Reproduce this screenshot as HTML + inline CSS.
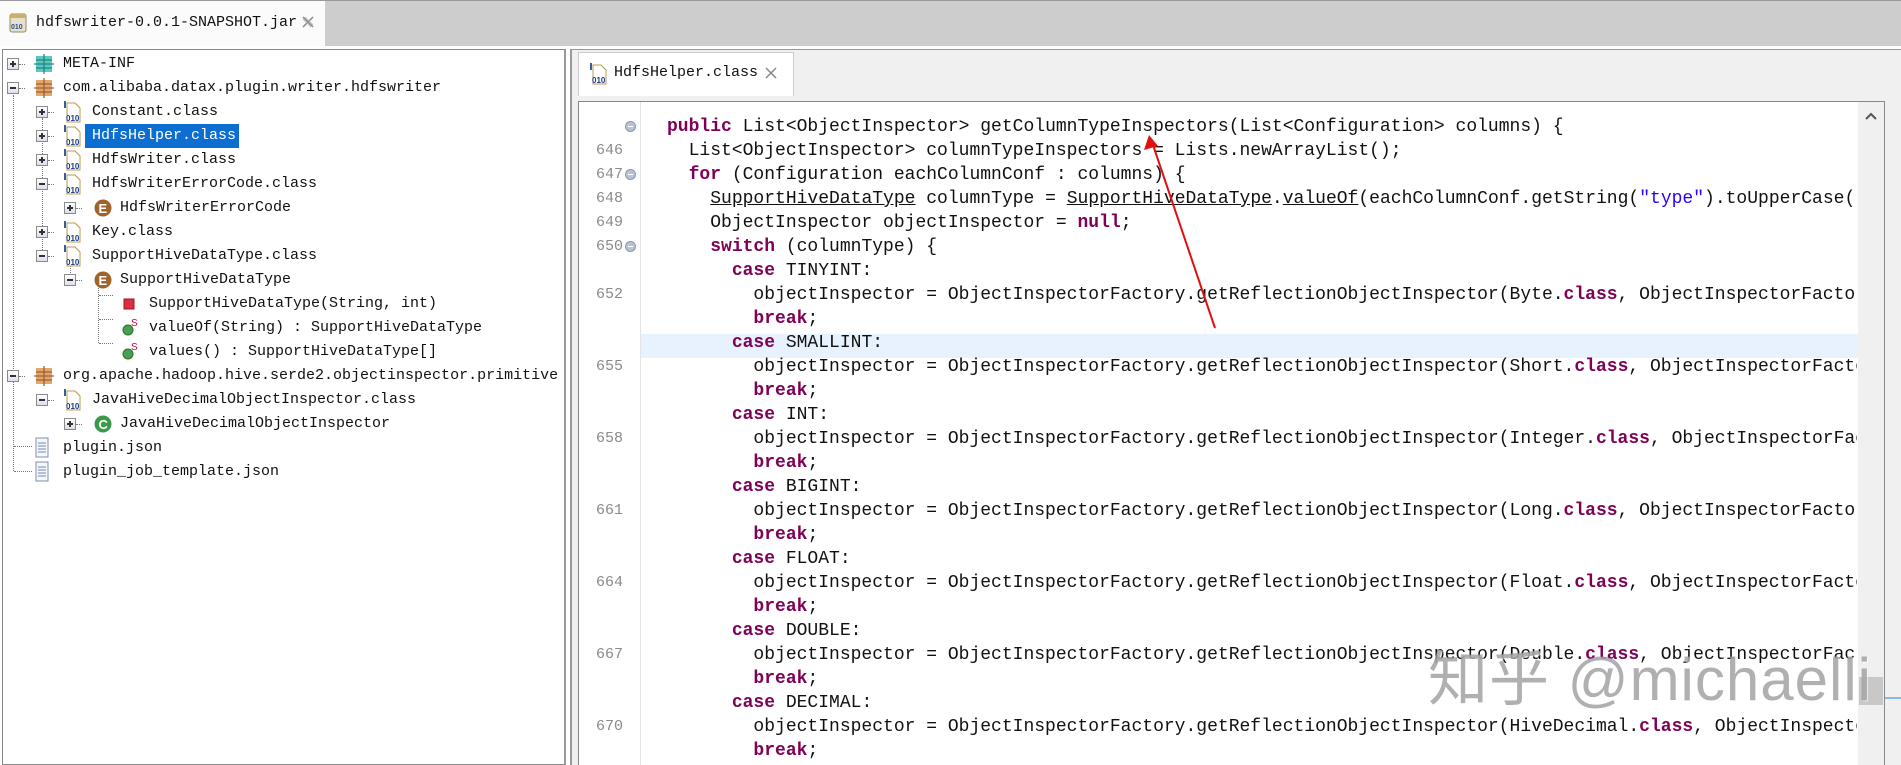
<!DOCTYPE html>
<html><head><meta charset="utf-8"><style>
*{margin:0;padding:0;box-sizing:border-box}
body{width:1901px;height:765px;overflow:hidden;background:#fff;position:relative;font-family:"Liberation Mono",monospace}
.abs{position:absolute}
#topbar{left:0;top:0;width:1901px;height:46px;background:#cdcdcd;border-top:1px solid #999}
#jartab{left:0;top:1px;width:325px;height:45px;background:#fbfbfb}
.tree{left:2px;top:49px;width:564px;height:716px;border:1px solid #888;border-right:2px solid #999;background:#fff}
.row{position:absolute;height:24px;line-height:24px;font-size:15px;color:#111;white-space:nowrap}
.pm{position:absolute;width:12px;height:12px;border:1px solid #8a8a8a;background:linear-gradient(#fff,#dde);}
.pm:before{content:"";position:absolute;left:2px;top:4px;width:6px;height:2px;background:#333}
.pm.p:after{content:"";position:absolute;left:4px;top:2px;width:2px;height:6px;background:#333}
.vd{position:absolute;border-left:1px dotted #777;width:0}
.hd{position:absolute;border-top:1px dotted #777;height:0}
.right{left:570px;top:49px;width:1331px;height:716px;background:#f0f0f0;border-left:2px solid #999;border-top:1px solid #999}
#editor{left:578px;top:101px;width:1307px;height:664px;background:#fff;border:1px solid #888;border-bottom:none;overflow:hidden}
.ln{position:absolute;height:24px;line-height:24px;font-size:15px;color:#8a8a8a;text-align:right;width:44px;left:0}
.cl{position:absolute;height:24px;line-height:24px;font-size:18px;color:#111;white-space:pre;left:88px}
.k{color:#7f0055;font-weight:bold}
.s{color:#2a00ff}
.u{text-decoration:underline}
.fold{position:absolute;left:46px;width:11px;height:11px;border-radius:50%;background:#b8c4d4;border:1px solid #8898b0}
.fold:before{content:"";position:absolute;left:2px;top:4px;width:5px;height:1px;background:#fff}
</style></head><body>
<div id="topbar" class="abs"></div>
<div id="jartab" class="abs"></div>
<svg class="abs" style="left:9px;top:13px" width="18" height="20"><rect x="1" y="1" width="16" height="18" rx="2" fill="#e8e0c8" stroke="#9a8a60"/><rect x="1" y="1" width="16" height="4" fill="#c8b070"/><text x="2" y="16" font-size="7" font-family="Liberation Sans" fill="#2050a0" font-weight="bold">010</text></svg>
<div class="abs" style="left:36px;top:11px;font-size:15px;line-height:24px;color:#111">hdfswriter-0.0.1-SNAPSHOT.jar</div>
<svg class="abs" style="left:302px;top:16px" width="12" height="12"><path d="M1 1L11 11M11 1L1 11" stroke="#888" stroke-width="1.5"/><path d="M3 1L11 9M1 3L9 11" stroke="#bbb" stroke-width="1"/></svg>

<div class="abs tree"></div>
<div class="abs" style="left:85px;top:124px;width:154px;height:24px;background:#0c6ed1"></div>
<div class="vd" style="left:13px;top:95px;height:376px"></div>
<div class="vd" style="left:42px;top:118px;height:138px"></div>
<div class="vd" style="left:70px;top:263px;height:10px"></div>
<div class="vd" style="left:98px;top:285px;height:58px"></div>
<div class="hd" style="left:99px;top:295px;width:14px"></div>
<div class="hd" style="left:99px;top:319px;width:14px"></div>
<div class="hd" style="left:99px;top:343px;width:14px"></div>
<div class="hd" style="left:14px;top:446px;width:18px"></div>
<div class="hd" style="left:14px;top:471px;width:18px"></div>

<div id="treerows"></div>
<script>
var rows=[
[0,'META-INF','p','meta'],[0,'com.alibaba.datax.plugin.writer.hdfswriter','m','pkg'],
[1,'Constant.class','p','cls'],[1,'HdfsHelper.class','p','cls',1],[1,'HdfsWriter.class','p','cls'],
[1,'HdfsWriterErrorCode.class','m','cls'],[2,'HdfsWriterErrorCode','p','E'],[1,'Key.class','p','cls'],
[1,'SupportHiveDataType.class','m','cls'],[2,'SupportHiveDataType','m','E'],
[3,'SupportHiveDataType(String, int)','','ctor'],[3,'valueOf(String) : SupportHiveDataType','','st'],[3,'values() : SupportHiveDataType[]','','st'],
[0,'org.apache.hadoop.hive.serde2.objectinspector.primitive','m','pkg'],
[1,'JavaHiveDecimalObjectInspector.class','m','cls'],[2,'JavaHiveDecimalObjectInspector','p','C'],
[0,'plugin.json','','json'],[0,'plugin_job_template.json','','json']];
var textX=[63,92,120,149],h='';
rows.forEach(function(r,i){
 var y=64+24*i,lv=r[0],tx=textX[lv],ix=tx-29,bx=tx-56;
 if(r[2]) h+='<div class="pm '+r[2]+'" style="left:'+bx+'px;top:'+(y-6)+'px"></div><div class="hd" style="left:'+(bx+12)+'px;top:'+y+'px;width:6px"></div>';
 var ic='';
 if(r[3]=='meta'||r[3]=='pkg'){var c=r[3]=='meta'?'#5cc8c0':'#e0a870',d=r[3]=='meta'?'#208880':'#a06030';
  ic='<svg class="abs" style="left:'+ix+'px;top:'+(y-10)+'px" width="20" height="20"><rect x="2" y="2" width="16" height="16" fill="'+c+'"/><path d="M10 0V20M0 10H20M2 6H18M2 14H18" stroke="'+d+'" stroke-width="1.3"/></svg>';}
 else if(r[3]=='cls'){ic='<svg class="abs" style="left:'+(ix-1)+'px;top:'+(y-12)+'px" width="20" height="24"><path d="M5 3H13L18 8V22H5Z" fill="#fff" stroke="#b89850"/><path d="M3 1V8" stroke="#3060a0" stroke-width="2"/><text x="4" y="21" font-size="8" font-weight="bold" font-family="Liberation Sans" fill="#1a3a80">010</text></svg>';}
 else if(r[3]=='E'||r[3]=='C'){var col=r[3]=='E'?'#a0642a':'#3a9a4a';
  ic='<svg class="abs" style="left:'+(ix+3)+'px;top:'+(y-9)+'px" width="18" height="18"><circle cx="9" cy="9" r="8.5" fill="'+col+'"/><text x="4.5" y="14" font-size="13" font-weight="bold" font-family="Liberation Sans" fill="#fff">'+r[3]+'</text></svg>';}
 else if(r[3]=='ctor'){ic='<svg class="abs" style="left:'+(ix+3)+'px;top:'+(y-6)+'px" width="12" height="12"><rect x="1" y="1" width="10" height="10" fill="#d83040" stroke="#a01020"/></svg>';}
 else if(r[3]=='st'){ic='<svg class="abs" style="left:'+(ix+2)+'px;top:'+(y-11)+'px" width="18" height="20"><circle cx="6" cy="13" r="5" fill="#4aa050" stroke="#2a7030"/><text x="9" y="9" font-size="10" font-family="Liberation Sans" fill="#b01040">S</text></svg>';}
 else if(r[3]=='json'){ic='<svg class="abs" style="left:'+ix+'px;top:'+(y-11)+'px" width="16" height="22"><rect x="2" y="1" width="12" height="19" fill="#f4f6fa" stroke="#8090a8"/><path d="M4 6H12M4 9H12M4 12H12M4 15H12" stroke="#7088b0"/></svg>';}
 h+=ic;
 h+='<div class="row" style="left:'+tx+'px;top:'+(y-12)+'px;'+(r[4]?'color:#fff':'')+'">'+r[1]+'</div>';
});
document.getElementById('treerows').innerHTML=h;
</script>

<div class="abs right"></div>
<div class="abs" style="left:578px;top:52px;width:216px;height:44px;background:#fff;border:1px solid #ccc;border-bottom:none"></div>
<svg class="abs" style="left:588px;top:62px" width="20" height="24"><path d="M5 3H13L18 8V22H5Z" fill="#fff" stroke="#b89850"/><path d="M3 1V8" stroke="#3060a0" stroke-width="2"/><text x="4" y="21" font-size="8" font-weight="bold" font-family="Liberation Sans" fill="#1a3a80">010</text></svg>
<div class="abs" style="left:614px;top:61px;font-size:15px;line-height:24px;color:#111">HdfsHelper.class</div>
<svg class="abs" style="left:765px;top:67px" width="12" height="12"><path d="M1 1L11 11M11 1L1 11" stroke="#888" stroke-width="1.5"/></svg>

<div id="editor" class="abs">
<div class="abs" style="left:61px;top:232px;width:1218px;height:24px;background:#e8f2fe"></div>
<div class="abs" style="left:61px;top:0;width:1px;height:664px;background:#e4e4e4"></div>
<div class="abs" style="left:1279px;top:0;width:27px;height:664px;background:#f0f0f0"></div>
<svg class="abs" style="left:1285px;top:10px" width="14" height="10"><path d="M2 7L7 2L12 7" stroke="#555" stroke-width="2" fill="none"/></svg>
<div class="abs" style="left:1280px;top:575px;width:24px;height:28px;background:#c8c8c8"></div>
<div id="code"></div>
</div>
<div class="abs" style="left:1885px;top:697px;width:16px;height:2px;background:#8ab8e8"></div>
<script>
var L=[
['','<span class="k">public</span> List&lt;ObjectInspector&gt; getColumnTypeInspectors(List&lt;Configuration&gt; columns) {',1],
['646','  List&lt;ObjectInspector&gt; columnTypeInspectors = Lists.newArrayList();'],
['647','  <span class="k">for</span> (Configuration eachColumnConf : columns) {',1],
['648','    <span class="u">SupportHiveDataType</span> columnType = <span class="u">SupportHiveDataType</span>.<span class="u">valueOf</span>(eachColumnConf.getString(<span class="s">"type"</span>).toUpperCase());'],
['649','    ObjectInspector objectInspector = <span class="k">null</span>;'],
['650','    <span class="k">switch</span> (columnType) {',1],
['','      <span class="k">case</span> TINYINT:'],
['652','        objectInspector = ObjectInspectorFactory.getReflectionObjectInspector(Byte.<span class="k">class</span>, ObjectInspectorFactory.ObjectInspectorOptions.JAVA);'],
['','        <span class="k">break</span>;'],
['','      <span class="k">case</span> SMALLINT:'],
['655','        objectInspector = ObjectInspectorFactory.getReflectionObjectInspector(Short.<span class="k">class</span>, ObjectInspectorFactory.ObjectInspectorOptions.JAVA);'],
['','        <span class="k">break</span>;'],
['','      <span class="k">case</span> INT:'],
['658','        objectInspector = ObjectInspectorFactory.getReflectionObjectInspector(Integer.<span class="k">class</span>, ObjectInspectorFactory.ObjectInspectorOptions.JAVA);'],
['','        <span class="k">break</span>;'],
['','      <span class="k">case</span> BIGINT:'],
['661','        objectInspector = ObjectInspectorFactory.getReflectionObjectInspector(Long.<span class="k">class</span>, ObjectInspectorFactory.ObjectInspectorOptions.JAVA);'],
['','        <span class="k">break</span>;'],
['','      <span class="k">case</span> FLOAT:'],
['664','        objectInspector = ObjectInspectorFactory.getReflectionObjectInspector(Float.<span class="k">class</span>, ObjectInspectorFactory.ObjectInspectorOptions.JAVA);'],
['','        <span class="k">break</span>;'],
['','      <span class="k">case</span> DOUBLE:'],
['667','        objectInspector = ObjectInspectorFactory.getReflectionObjectInspector(Double.<span class="k">class</span>, ObjectInspectorFactory.ObjectInspectorOptions.JAVA);'],
['','        <span class="k">break</span>;'],
['','      <span class="k">case</span> DECIMAL:'],
['670','        objectInspector = ObjectInspectorFactory.getReflectionObjectInspector(HiveDecimal.<span class="k">class</span>, ObjectInspectorFactory.ObjectInspectorOptions.JAVA);'],
['','        <span class="k">break</span>;']];
var c='';
L.forEach(function(l,i){var t=13+24*i;
 c+='<div class="ln" style="top:'+t+'px">'+l[0]+'</div>';
 if(l[2]) c+='<div class="fold" style="top:'+(t+6)+'px"></div>';
 c+='<div class="cl" style="top:'+t+'px;width:1190px;overflow:hidden">'+l[1]+'</div>';
});
document.getElementById('code').innerHTML=c;
</script>
<svg class="abs" style="left:0;top:0" width="1901" height="765"><line x1="1215" y1="328" x2="1152" y2="142" stroke="#e01010" stroke-width="2"/><path d="M1149 135L1144 150L1158 146Z" fill="#e01010"/></svg>
<div class="abs" style="left:1428px;top:644px;font-family:'Liberation Sans','Noto Sans CJK SC',sans-serif;font-size:60px;line-height:72px;color:rgba(150,150,150,0.75);white-space:nowrap;letter-spacing:1px;text-shadow:1px 1px 0 rgba(255,255,255,0.6)">知乎 @michaelli</div>
</body></html>
